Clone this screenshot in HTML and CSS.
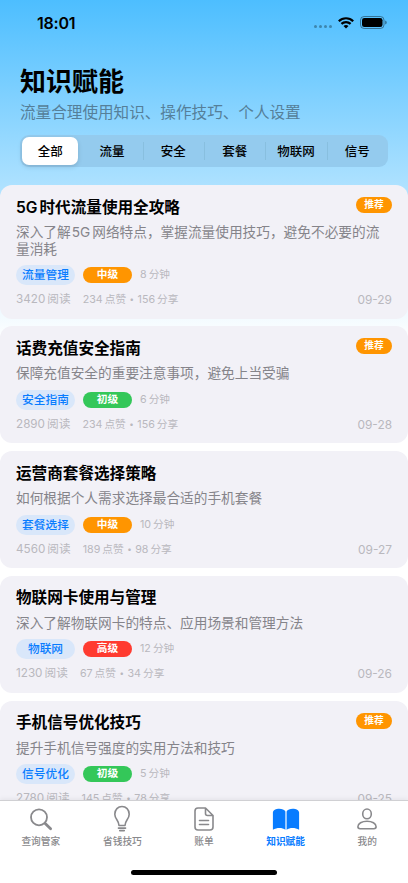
FILE: index.html
```html
<!DOCTYPE html>
<html lang="zh-CN">
<head>
<meta charset="utf-8">
<meta name="viewport" content="width=device-width, initial-scale=1">
<title>知识赋能</title>
<link rel="stylesheet" href="styles.css">
</head>
<body>
<div class="app">
  <div class="status">
    <span class="time">18:01</span>
    <span class="signals">
      <span class="dots"><i></i><i></i><i></i><i></i></span>
      <svg class="wifi" width="16" height="12" viewBox="0 0 16 12"><path d="M.8 4.2a10.3 10.3 0 0 1 14.4 0M3.4 6.9a6.6 6.6 0 0 1 9.2 0" fill="none" stroke="#000" stroke-width="2.2"/><path d="M8 11.6 5.5 9.1a3.6 3.6 0 0 1 5 0z"/></svg>
      <svg class="battery" width="27" height="13" viewBox="0 0 27 13"><rect x=".5" y=".5" width="23.5" height="12" rx="3.6" fill="none" stroke="#000" stroke-opacity=".4"/><rect x="2" y="2" width="20.5" height="9" rx="2.3"/><path d="M25.2 4.4v4.2a2.2 2.2 0 0 0 0-4.2z" opacity=".45"/></svg>
    </span>
  </div>
  <header>
    <h1>知识赋能</h1>
    <p class="subtitle">流量合理使用知识、操作技巧、个人设置</p>
    <nav class="segments"><span class="selected">全部</span><span>流量</span><span>安全</span><span>套餐</span><span>物联网</span><span>信号</span></nav>
  </header>
  <main>
    <article class="card">
      <div class="heading"><h2>5G<span class="cjk">时代流量使用全攻略</span></h2><span class="recommend">推荐</span></div>
      <p class="summary">深入了解<span class="num">5G</span>网络特点，掌握流量使用技巧，避免不必要的流量消耗</p>
      <div class="tags"><span class="topic">流量管理</span><span class="level medium">中级</span><span class="duration">8<b>分钟</b></span></div>
      <div class="meta"><span class="reads">3420<b>阅读</b></span><span class="likes">234<b>点赞</b> <i>•</i> 156<b>分享</b></span><time>09-29</time></div>
    </article>
    <article class="card">
      <div class="heading"><h2>话费充值安全指南</h2><span class="recommend">推荐</span></div>
      <p class="summary">保障充值安全的重要注意事项，避免上当受骗</p>
      <div class="tags"><span class="topic">安全指南</span><span class="level easy">初级</span><span class="duration">6<b>分钟</b></span></div>
      <div class="meta"><span class="reads">2890<b>阅读</b></span><span class="likes">234<b>点赞</b> <i>•</i> 156<b>分享</b></span><time>09-28</time></div>
    </article>
    <article class="card">
      <div class="heading"><h2>运营商套餐选择策略</h2></div>
      <p class="summary">如何根据个人需求选择最合适的手机套餐</p>
      <div class="tags"><span class="topic">套餐选择</span><span class="level medium">中级</span><span class="duration">10<b>分钟</b></span></div>
      <div class="meta"><span class="reads">4560<b>阅读</b></span><span class="likes">189<b>点赞</b> <i>•</i> 98<b>分享</b></span><time>09-27</time></div>
    </article>
    <article class="card">
      <div class="heading"><h2>物联网卡使用与管理</h2></div>
      <p class="summary">深入了解物联网卡的特点、应用场景和管理方法</p>
      <div class="tags"><span class="topic">物联网</span><span class="level hard">高级</span><span class="duration">12<b>分钟</b></span></div>
      <div class="meta"><span class="reads">1230<b>阅读</b></span><span class="likes">67<b>点赞</b> <i>•</i> 34<b>分享</b></span><time>09-26</time></div>
    </article>
    <article class="card">
      <div class="heading"><h2>手机信号优化技巧</h2><span class="recommend">推荐</span></div>
      <p class="summary">提升手机信号强度的实用方法和技巧</p>
      <div class="tags"><span class="topic">信号优化</span><span class="level easy">初级</span><span class="duration">5<b>分钟</b></span></div>
      <div class="meta"><span class="reads">2780<b>阅读</b></span><span class="likes">145<b>点赞</b> <i>•</i> 78<b>分享</b></span><time>09-25</time></div>
    </article>
  </main>
  <footer>
    <nav class="tabs">
      <a><svg viewBox="0 0 28 28"><circle cx="12" cy="12.3" r="8" stroke-width="1.8"/><path d="m18.2 18.4 5.4 5.3" stroke-width="2.8"/></svg><span>查询管家</span></a>
      <a><svg viewBox="0 0 28 28"><path d="M11 20.5c0-5-4.2-6.4-4.2-11.3C6.8 4.6 10 1.5 14 1.5s7.2 3.1 7.2 7.7c0 4.9-4.2 6.3-4.2 11.3z" stroke-width="1.6"/><path d="M10.5 23.1h7M11.8 25.6h4.4" stroke-width="1.7"/></svg><span>省钱技巧</span></a>
      <a><svg viewBox="0 0 28 28"><path d="M15.500 3H8a3 3 0 0 0-3 3v16a3 3 0 0 0 3 3h12a3 3 0 0 0 3-3V10.500zM15.500 3v5.500a2 2 0 0 0 2 2H23M9.500 15.500h9M9.500 19.500h9" stroke-width="1.600"/></svg><span>账单</span></a>
      <a class="active"><svg viewBox="0 0 28 28"><path d="M13.400 24.800c-3-2.100-8.400-2.400-12.500 0V7.500C.9 3 11.500 2.400 13.400 6.500zM14.600 24.800c3-2.100 8.400-2.400 12.500 0V7.500C27.100 3 16.500 2.400 14.600 6.500z"/></svg><span>知识赋能</span></a>
      <a><svg viewBox="0 0 28 28"><ellipse cx="14" cy="8.900" rx="4.300" ry="4.900" stroke-width="1.600"/><path d="M4.900 21.800c0-3.300 4-5.600 9.100-5.600s9.100 2.300 9.100 5.600c0 1.300-.8 1.900-2.200 1.900H7.100c-1.400 0-2.200-.6-2.200-1.900z" stroke-width="1.600"/></svg><span>我的</span></a>
    </nav>
    <div class="home"></div>
  </footer>
</div>
</body>
</html>
```
FILE: styles.css
```css
* { box-sizing: border-box; }
body, h1, h2, p { margin: 0; }
body { font-family: Inter, "Noto Sans CJK SC", sans-serif; background: #fff; color: #000; }
b { font-weight: inherit; }
.app { height: 883px; overflow: hidden; display: flex; flex-direction: column; background: linear-gradient(#4dbeff 0, #b5e4ff 200px, #fff 340px); }
.status { height: 62px; flex: none; display: flex; justify-content: space-between; padding: 13.5px 21px 0 37px; }
.time { font-size: 16px; font-weight: 600; line-height: 18px; letter-spacing: -.2px; }
.signals { display: flex; height: 18px; align-items: center; }
.dots { display: flex; gap: 2px; margin: 8px 6px 0 0; }
.dots i { width: 3px; height: 3px; border-radius: 50%; background: #3d86ad; }
.wifi { margin-right: 6px; }
header { height: 123.3px; flex: none; padding: 1px 20px 0; }
h1 { font-size: 26px; line-height: 38px; font-weight: 700; }
.subtitle { font-size: 15.6px; line-height: 22px; color: #557f99; margin-top: 1px; white-space: nowrap; }
.segments { height: 32px; margin-top: 10.5px; padding: 2px 0; display: grid; grid-template-columns: repeat(6, 1fr); border-radius: 9px; background: #94cbee; }
.segments span { display: flex; align-items: center; justify-content: center; font-size: 12.5px; font-weight: 500; position: relative; }
.segments .selected { margin: 0 3px 0 2px; background: #fff; border-radius: 7px; box-shadow: 0 2px 5px #0002; }
.segments span:nth-child(n+3)::before { content: ""; position: absolute; left: 0; top: 5px; height: 18px; width: 1px; background: #88bfdf; }
main { flex: 1; min-height: 0; overflow: hidden; display: flex; flex-direction: column; gap: 7.7px; }
.card { flex: none; background: #f2f1f7; border-radius: 12px; padding: 10.5px 16px 11.5px; }
.heading { display: flex; height: 24px; justify-content: space-between; }
h2 { font-size: 15.6px; line-height: 24px; font-weight: 600; white-space: nowrap; }
.cjk { margin-left: 2px; }
.recommend { height: 16px; width: 36px; margin-top: 1.5px; border-radius: 8px; background: #ff9500; color: #fff; text-align: center; font-size: 9.7px; line-height: 16px; font-weight: 600; }
.summary { margin-top: 4.5px; color: #85848a; font-size: 13.68px; line-height: 16.5px; }
.num { margin: 0 2px 0 1px; }
.tags { display: flex; align-items: center; height: 20px; margin-top: 8px; gap: 8px; }
.topic { width: 59px; height: 20px; border-radius: 10px; text-align: center; line-height: 20px; background: #d9e7fa; color: #087cff; font-size: 11.7px; font-weight: 500; }
.level { width: 49px; height: 16px; border-radius: 8px; color: #fff; text-align: center; font-size: 10.7px; line-height: 16px; font-weight: 600; }
.medium { background: #ff9500; }
.easy { background: #34c759; }
.hard { background: #ff3b30; }
.duration, .meta { color: #b9b8be; }
.duration { font-size: 10.7px; line-height: 20px; }
.duration b, .meta b { margin-left: 2px; }
.meta { display: flex; align-items: center; margin-top: 7px; height: 15px; font-size: 11.7px; line-height: 15px; white-space: nowrap; }
.likes { margin-left: 12px; font-size: 10.7px; }
.likes i { display: inline-block; width: 5.5px; font-size: 8px; font-style: normal; text-align: center; vertical-align: 1px; line-height: 8px; }
time { margin-left: auto; font-size: 11.9px; }
footer { height: 83px; flex: none; background: #fff; border-top: 1px solid #d0d0d3; box-shadow: 0 -1px 5px #0001; position: relative; }
.tabs { display: grid; grid-template-columns: repeat(5, 1fr); padding-top: 4px; }
.tabs a { display: flex; flex-direction: column; align-items: center; color: #89898c; }
.tabs svg { width: 28px; height: 28px; fill: none; stroke: currentColor; stroke-linecap: round; stroke-linejoin: round; }
.tabs span { font-size: 9.7px; line-height: 14px; font-weight: 500; margin-top: 2px; }
.tabs .active { color: #087cff; }
.tabs .active svg { fill: currentColor; stroke: none; }
.tabs .active span { font-weight: 600; }
.home { width: 146px; height: 5px; border-radius: 3px; background: #000; margin: 21px auto 0; }
```
